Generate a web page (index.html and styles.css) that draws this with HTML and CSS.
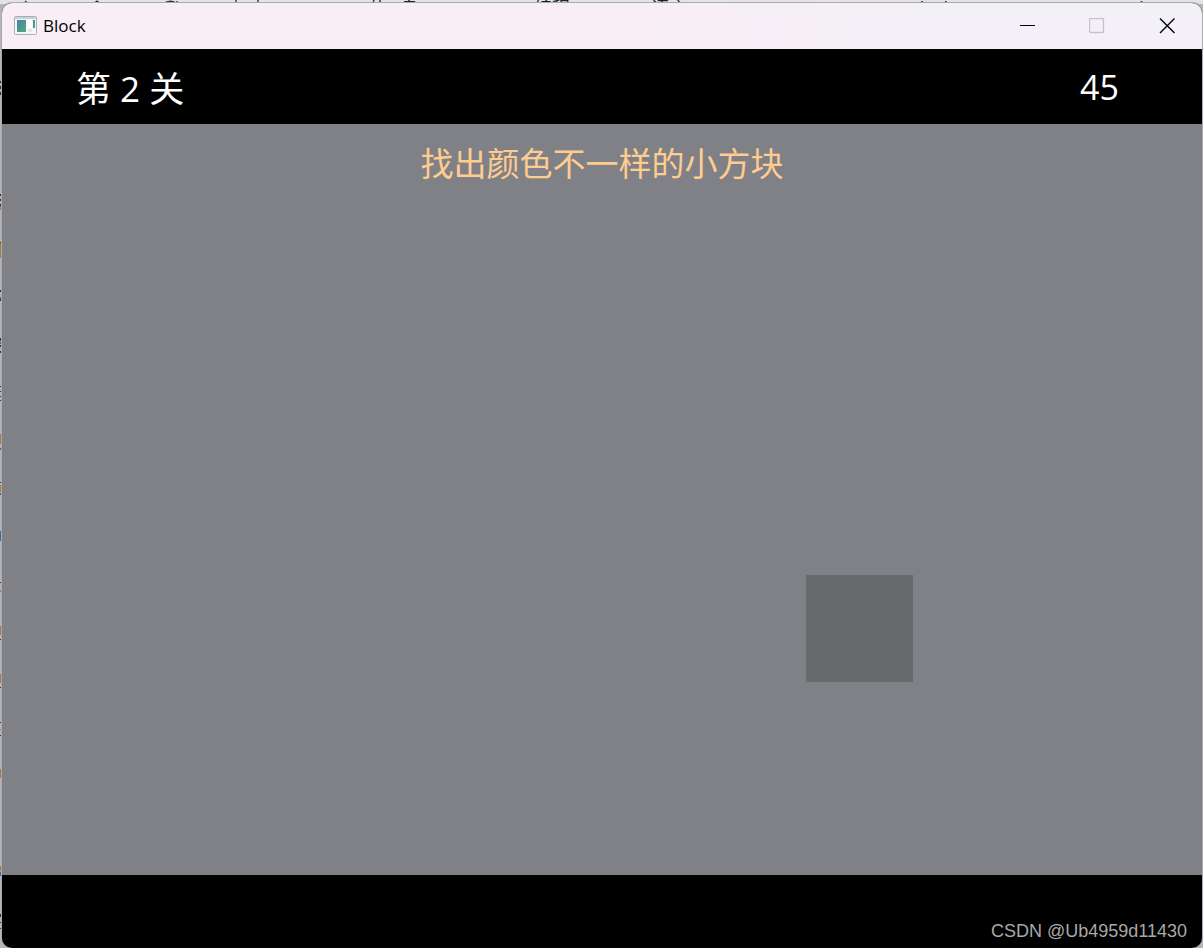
FILE: index.html
```
<!DOCTYPE html>
<html lang="zh-CN">
<head>
<meta charset="utf-8">
<title>Block</title>
<link rel="stylesheet" href="styles.css">
</head>

<body>
<div class="path">
	<svg class="tools" width="326" height="4" viewBox="0 0 326 4" fill="none" stroke="#333" stroke-width="1.4">
		<path d="M25 1L29 4M93 4L97 1L101 4M163 4Q170 -1 176 3M177 1V4M236 4V0M258 4V0"/>
	</svg>
	<span class="crumb1">Reno的U盘 (D:)</span>
	<span class="crumb2">编程</span>
	<span class="crumb3">C语言</span>
	<span class="crumb4">20240128</span>
	<span class="crumb5">Block</span>
	<span class="crumb6">x64</span>
	<span>Debug</span>
</div>
<svg class="edge" width="2" height="948" viewBox="0 0 2 948" fill="none" stroke-width="2">
	<path stroke="#333" d="M1 81V83M1 86V89M1 92V95M1 194V196M1 199V201M1 204V206M1 242V243M1 290V292M1 299V301M1 338V341M1 345V347M1 351V353M1 386V387M1 391V392M1 396V397M1 400V401M1 482V483M1 582V583M1 639V640M1 687V688M1 722V723M1 735V736M1 914V917M1 922V923M1 928V929"/>
	<path stroke="#b0783f" d="M1 206V210M1 243V258M1 434V444M1 485V492M1 590V592M1 626V635M1 674V683M1 729V730M1 769V778M1 866V871"/>
	<path stroke="#3b6d9c" d="M1 297V299M1 342V344M1 448V450M1 493V495M1 531V541M1 872V876"/>
</svg>

<div class="window">
	<div class="titlebar">
		<svg class="appicon" width="24" height="20" viewBox="0 0 24 20">
			<defs>
				<linearGradient id="pane" x1="0" y1="0" x2="1" y2="1">
					<stop offset="0" stop-color="#4a7fae"/>
					<stop offset="1" stop-color="#4fae73"/>
				</linearGradient>
			</defs>
			<rect x="1.5" y="0.5" width="22" height="18" rx="1" fill="#f4f6f7" stroke="#a7aeb8"/>
			<rect x="2" y="1" width="21" height="2" fill="#c9d2dc"/>
			<rect x="4" y="4" width="9" height="12" fill="url(#pane)"/>
			<rect x="15" y="4" width="4" height="8" fill="#fff"/>
			<rect x="15" y="13" width="4" height="3" fill="#e6e6e8"/>
			<rect x="20" y="4" width="2" height="8" fill="url(#pane)"/>
		</svg>
		<span class="name">Block</span>
		<button class="ctl" aria-label="最小化">
			<svg width="16" height="16" viewBox="0 0 16 16"><path d="M1 7.5H16" stroke="#000"/></svg>
		</button>
		<button class="ctl" aria-label="最大化" disabled>
			<svg width="16" height="16" viewBox="0 0 16 16"><rect x="0.5" y="0.5" width="14" height="14" rx="1" fill="none" stroke="#c5c2c9" stroke-width="1.3"/></svg>
		</button>
		<button class="ctl" aria-label="关闭">
			<svg width="16" height="16" viewBox="0 0 16 16"><path d="M1 0.5L15.5 15M15.5 0.5L1 15" stroke="#000" stroke-width="1.4"/></svg>
		</button>
	</div>
	<div class="status">
		<span class="level">第 2 关</span>
		<span>45</span>
	</div>
	<div class="board">
		<div class="tip">找出颜色不一样的小方块</div>
		<button class="block" aria-label="小方块"></button>
	</div>
	<div class="bottom">CSDN @Ub4959d11430</div>
</div>
</body>
</html>
```
FILE: styles.css
```
*{box-sizing:border-box;}
body{
	margin:0;
	height:100vh;
	padding:3px 1px 0 2px;
	background:#b4b5b7;
	font-family:"Open Sans","Noto Sans CJK SC",sans-serif;
	overflow:hidden;
}

/* window behind: address bar on top, text along the left edge */
.path{
	position:absolute;
	left:0; right:0; top:0;
	height:4px;
	display:flex;
	align-items:flex-start;
	overflow:hidden;
	background:#e4e4e4;
	color:#222;
	font-size:18px;
	line-height:16px;
	white-space:nowrap;
}
.path span,.tools{flex:none;}
.crumb1{width:208px;}
.crumb2{width:106px;}
.crumb3{width:116px;}
.crumb4{width:152px;}
.crumb5{width:122px;}
.crumb6{width:86px;}
.edge{
	position:absolute;
	left:0; top:0;
}

.window{
	position:relative;
	height:100%;
	display:flex;
	flex-direction:column;
	border-radius:10px;
	overflow:hidden;
	background:#000;
	box-shadow:0 0 0 1px #aaa9ac;
}
.titlebar{
	flex:none;
	height:46px;
	padding-left:11px;
	display:flex;
	align-items:center;
	background:linear-gradient(90deg,#f9eef6 0,#f9eef6 52%,#f3f0f7 80%);
}
.name{
	flex:1;
	padding-left:6px;
	font-size:17px;
	line-height:20px;
}
.ctl{
	width:70px;
	height:46px;
	padding:0;
	border:0;
	background:none;
	display:flex;
	align-items:center;
	justify-content:center;
}

.status{
	flex:none;
	height:75px;
	padding:0 83px 0 74px;
	display:flex;
	align-items:center;
	justify-content:space-between;
	color:#fff;
	font-size:34px;
}
.level{font-size:35px;}
.board{
	position:relative;
	flex:1;
	background:#808186;
}
.tip{
	padding-top:14px;
	text-align:center;
	color:#ffcc90;
	font-family:"Noto Sans CJK SC",sans-serif;
	font-size:33px;
	line-height:48px;
}
.block{
	position:absolute;
	left:67%;
	top:60%;
	width:107px;
	height:107px;
	padding:0;
	border:0;
	background:#696a6e;
}
.bottom{
	flex:none;
	height:73px;
	padding:43px 15px 0 0;
	text-align:right;
	color:#a8a8a8;
	font-family:"Liberation Sans",sans-serif;
	font-size:18px;
	line-height:26px;
}
```
